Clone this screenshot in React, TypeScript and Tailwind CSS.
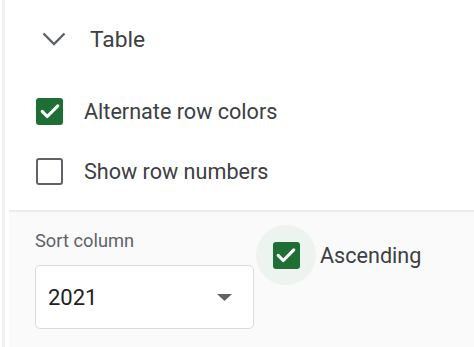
import React from "react";

function Check({ checked }: { checked: boolean }) {
  if (checked) {
    return (
      <div className="w-[27px] h-[27px] rounded-[3px] bg-[#1e6e36] flex items-center justify-center">
        <svg width="22" height="22" viewBox="0 0 24 24">
          <path d="M3.5 12.5l5.5 5.5L20.5 6.5" fill="none" stroke="#ffffff" strokeWidth="3.4" strokeLinecap="round" strokeLinejoin="round" />
        </svg>
      </div>
    );
  }
  return <div className="w-[27px] h-[27px] rounded-[3px] border-[2.5px] border-[#5f6368] bg-white" />;
}

export default function App() {
  return (
    <div className="w-[474px] h-[347px] overflow-hidden bg-white flex" style={{ fontFamily: "Roboto, 'Liberation Sans', sans-serif" }}>
      <div className="w-[2px]" />
      <div className="w-[3px] bg-[#f0f0f0]" />
      <div className="w-[4px]" />
      <div className="flex-1 flex flex-col">
        <div className="h-[78px] flex items-center">
          <div className="w-[33px]" />
          <svg width="24" height="16" viewBox="0 0 24 16">
            <path d="M1.5 2.5L12 13L22.5 2.5" fill="none" stroke="#5f6368" strokeWidth="2.4" />
          </svg>
          <span className="ml-[24px] mt-[2px] text-[22.8px] text-[#3c4043]">Table</span>
        </div>
        <div className="h-[3px]" />
        <div className="h-[60px] flex items-center pl-[27px]">
          <Check checked />
          <span className="ml-[21px] mt-[2px] text-[21.6px] text-[#3c4043]">Alternate row colors</span>
        </div>
        <div className="h-[60px] flex items-center pl-[27px]">
          <Check checked={false} />
          <span className="ml-[21px] mt-[2px] text-[21.6px] text-[#3c4043]">Show row numbers</span>
        </div>
        <div className="h-[9px]" />
        <div className="flex-1 bg-[#fafafa] border-t-[2px] border-[#ececec] flex pl-[26px]">
          <div className="flex flex-col pt-[19px]">
            <span className="text-[18.3px] leading-[20px] text-[#5f6368]">Sort column</span>
            <div className="mt-[14px] w-[219px] h-[64px] rounded-[5px] border border-[#dadce0] bg-white flex items-center pl-[12px] pr-[21px]">
              <span className="flex-1 text-[22px] text-[#202124]">2021</span>
              <svg width="15" height="7" viewBox="0 0 15 7">
                <path d="M0 0H15L7.5 7Z" fill="#5f6368" />
              </svg>
            </div>
          </div>
          <div className="ml-[2px] pt-[13px] flex items-start">
            <div className="flex items-center">
              <div className="w-[60px] h-[60px] rounded-full bg-[#edf3ee] flex items-center justify-center">
                <Check checked />
              </div>
              <span className="ml-[4px] mt-[3px] text-[21.6px] text-[#3c4043]">Ascending</span>
            </div>
          </div>
        </div>
      </div>
    </div>
  );
}
